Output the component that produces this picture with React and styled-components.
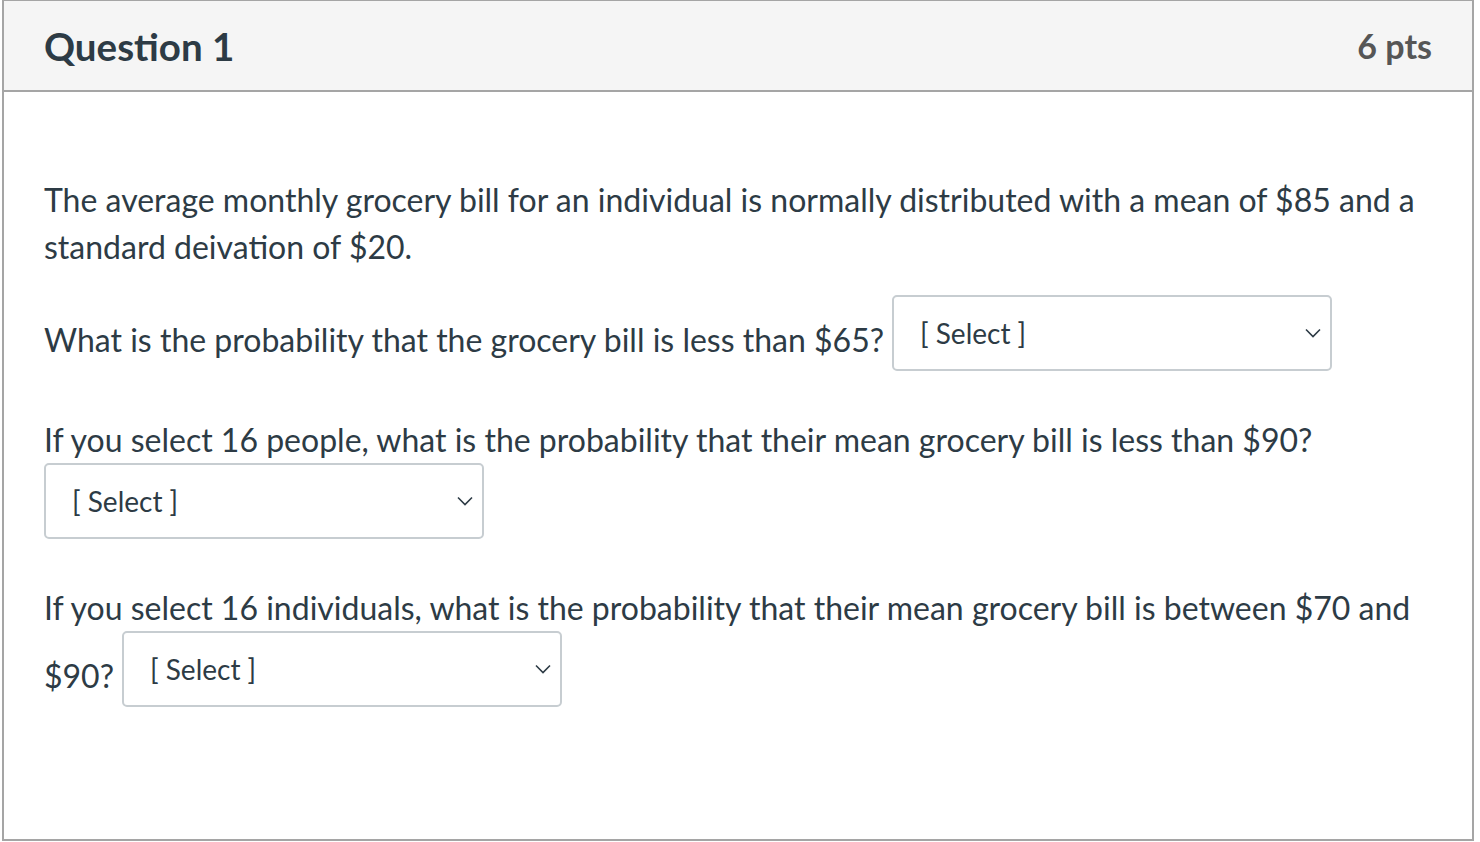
import React from "react";
import styled, { createGlobalStyle } from "styled-components";

const GlobalStyle = createGlobalStyle`
  html, body {
    margin: 0;
    padding: 0;
    background: #fff;
  }
  body {
    font-family: Lato, "Liberation Sans", sans-serif;
    color: #2d3b45;
  }
`;

const Card = styled.div`
  margin-left: 2px;
  width: 1472px;
  height: 841px;
  border: 2px solid #a5a5a5;
  border-top-width: 1px;
  box-sizing: border-box;
  display: flex;
  flex-direction: column;
`;

const Header = styled.div`
  display: flex;
  justify-content: space-between;
  align-items: center;
  height: 91px;
  padding: 0 40px 0 40px;
  background: #f5f5f5;
  border-bottom: 2px solid #a5a5a5;
  box-sizing: border-box;
`;

const Title = styled.h2`
  margin: 0;
  font-size: 38.5px;
  font-weight: 700;
  color: #2d3b45;
`;

const Points = styled.div`
  font-size: 34px;
  font-weight: 700;
  color: #565656;
`;

const Body = styled.div`
  padding: 84px 42px 0 40px;
`;

const Para = styled.p`
  margin: ${p => p.$top || 0}px 0 0;
  font-size: 32px;
  line-height: 47px;
  color: #2d3b45;
`;

const SelectBox = styled.span`
  display: inline-flex;
  align-items: center;
  justify-content: space-between;
  box-sizing: border-box;
  width: 440px;
  height: 76px;
  margin-left: ${p => p.$left || 0}px;
  padding: 0 9px 0 26px;
  border: 2px solid #c7cdd1;
  border-radius: 5px;
  vertical-align: 8px;
  font-size: 28px;
  line-height: 1;
  background: #fff;
`;

const Chevron = () => (
  <svg width="16" height="10" viewBox="0 0 16 10">
    <path d="M1 1.5 L8 8.5 L15 1.5" fill="none" stroke="#2d3b45" strokeWidth="1.6" />
  </svg>
);

const Select = ({ left }) => (
  <SelectBox $left={left}>
    <span>[ Select ]</span>
    <Chevron />
  </SelectBox>
);

export default function App() {
  return (
    <>
      <GlobalStyle />
      <Card>
        <Header>
          <Title>Question 1</Title>
          <Points>6 pts</Points>
        </Header>
        <Body>
          <Para>
            The average monthly grocery bill for an individual is normally
            distributed with a mean of $85 and a standard deivation of $20.
          </Para>
          <Para $top={25}>
            What is the probability that the grocery bill is less than $65?
            <Select left={8} />
          </Para>
          <Para $top={45}>
            If you select 16 people, what is the probability that their mean
            grocery bill is less than $90? <Select />
          </Para>
          <Para $top={45}>
            If you select 16 individuals, what is the probability that their
            mean grocery bill is between $70 and $90?
            <Select left={8} />
          </Para>
        </Body>
      </Card>
    </>
  );
}
